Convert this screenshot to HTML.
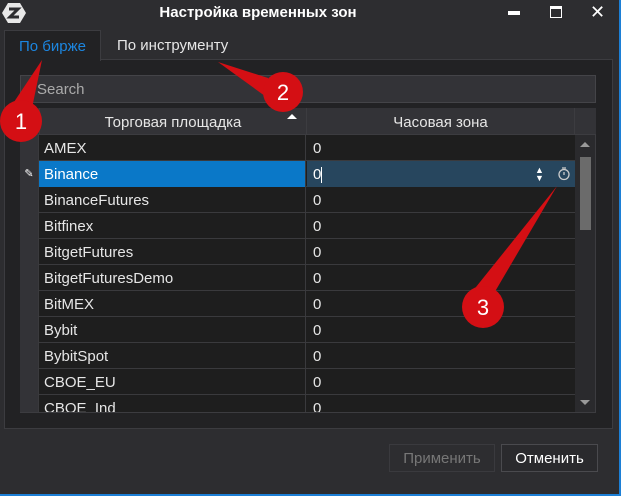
<!DOCTYPE html>
<html><head><meta charset="utf-8"><style>
*{margin:0;padding:0;box-sizing:border-box}
body{width:621px;height:496px;background:#2d2d30;font-family:"Liberation Sans",sans-serif;color:#e6e6e6;position:relative;overflow:hidden;font-size:15px}
.a{position:absolute}
.title{left:0;top:0;width:516px;height:28px;text-align:center;font-weight:bold;font-size:15px;line-height:25px;color:#fff}
.row{position:absolute;left:20px;width:555px;height:26px;border-bottom:1px solid #3a3a3d}
.row .h{position:absolute;left:0;top:0;width:19px;height:26px;background:#333337;border-right:1px solid #3a3a3d}
.row .c1{position:absolute;left:19px;top:0;width:267px;height:26px;line-height:27px;padding-left:5px;border-right:1px solid #3a3a3d}
.row .c2{position:absolute;left:287px;top:0;width:268px;height:26px;line-height:27px;padding-left:6px}
</style></head><body>
<div class="a" style="right:0;top:0;width:2px;height:496px;background:#1c7fd6"></div>
<div class="a" style="left:0;bottom:0;width:621px;height:2px;background:#1c7fd6"></div>
<svg class="a" style="left:2px;top:2px" width="24" height="22" viewBox="0 0 24 22"><polygon points="6,1 18,1 24,11 18,21 6,21 0,11" fill="#e8e8e8"/><path d="M7 7h9l-8 8h9" stroke="#2d2d30" stroke-width="3" fill="none"/></svg>
<div class="a title">Настройка временных зон</div>
<div class="a" style="left:508px;top:11px;width:12px;height:4px;background:#fff"></div>
<div class="a" style="left:550px;top:6px;width:12px;height:12px;border:1.5px solid #fff;border-top-width:3px"></div>
<div class="a" style="left:590px;top:2px;font-size:18px;color:#fff">✕</div>
<div class="a" style="left:4px;top:59px;width:609px;height:370px;background:#222224;border:1px solid #3c3c40"></div>
<div class="a" style="left:4px;top:30px;width:97px;height:31px;background:#222224;border:1px solid #3c3c40;border-bottom:none;color:#1c86e0;padding:7px 0 0 14px">По бирже</div>
<div class="a" style="left:117px;top:37px;color:#e6e6e6">По инструменту</div>
<div class="a" style="left:20px;top:75px;width:576px;height:28px;background:#333337;border:1px solid #444448;color:#aaa;line-height:27px;padding-left:16px">Search</div>
<div class="a" style="left:20px;top:108px;width:576px;height:305px;background:#1e1e1e;border:1px solid #3c3c40"></div>
<div class="a" style="left:20px;top:108px;width:576px;height:27px;background:#333337;border-bottom:1px solid #3c3c40"></div>
<div class="a" style="left:39px;top:108px;width:268px;height:27px;border-left:1px solid #3c3c40;border-right:1px solid #3c3c40;text-align:center;line-height:29px">Торговая площадка</div>
<div class="a" style="left:287px;top:114px;width:0;height:0;border-left:5px solid transparent;border-right:5px solid transparent;border-bottom:5px solid #fff"></div>
<div class="a" style="left:307px;top:108px;width:268px;height:27px;border-right:1px solid #3c3c40;text-align:center;line-height:29px">Часовая зона</div>
<div class="row" style="top:135px"><div class="h"></div><div class="c1">AMEX</div><div class="c2">0</div></div>
<div class="row" style="top:161px"><div class="h" style="color:#fff;font-size:11px;text-align:center;line-height:26px">✎</div><div class="c1" style="background:#0a78c8;color:#fff">Binance</div><div class="c2" style="background:#27465e;color:#fff">0<span style="display:inline-block;width:1px;height:16px;background:#fff;vertical-align:middle"></span>
<span style="position:absolute;left:228px;top:5px;font-size:9px;line-height:8px;color:#fff">▲<br>▼</span>
<svg style="position:absolute;left:250px;top:5px" width="14" height="15" viewBox="0 0 14 15"><circle cx="7" cy="8.5" r="5" fill="none" stroke="#ccc" stroke-width="1.3"/><path d="M5 2h4M7 6v3" stroke="#ccc" stroke-width="1.3"/></svg></div></div>
<div class="row" style="top:187px"><div class="h"></div><div class="c1">BinanceFutures</div><div class="c2">0</div></div>
<div class="row" style="top:213px"><div class="h"></div><div class="c1">Bitfinex</div><div class="c2">0</div></div>
<div class="row" style="top:239px"><div class="h"></div><div class="c1">BitgetFutures</div><div class="c2">0</div></div>
<div class="row" style="top:265px"><div class="h"></div><div class="c1">BitgetFuturesDemo</div><div class="c2">0</div></div>
<div class="row" style="top:291px"><div class="h"></div><div class="c1">BitMEX</div><div class="c2">0</div></div>
<div class="row" style="top:317px"><div class="h"></div><div class="c1">Bybit</div><div class="c2">0</div></div>
<div class="row" style="top:343px"><div class="h"></div><div class="c1">BybitSpot</div><div class="c2">0</div></div>
<div class="row" style="top:369px"><div class="h"></div><div class="c1">CBOE_EU</div><div class="c2">0</div></div>
<div class="row" style="top:395px;height:17px;overflow:hidden;border:none"><div class="h"></div><div class="c1">CBOE_Ind</div><div class="c2">0</div></div>
<div class="a" style="left:575px;top:135px;width:20px;height:277px;background:#2a2a2d"></div>
<div class="a" style="left:580px;top:142px;border-left:5px solid transparent;border-right:5px solid transparent;border-bottom:5px solid #999"></div>
<div class="a" style="left:580px;top:157px;width:11px;height:73px;background:#6b6b6b"></div>
<div class="a" style="left:580px;top:400px;border-left:5px solid transparent;border-right:5px solid transparent;border-top:5px solid #999"></div>
<div class="a" style="left:389px;top:444px;width:106px;height:28px;border:1px solid #3a3a3e;color:#777;text-align:center;line-height:27px">Применить</div>
<div class="a" style="left:501px;top:444px;width:97px;height:28px;border:1px solid #4a4a4e;background:#2a2a2d;color:#fff;text-align:center;line-height:27px">Отменить</div>
<svg class="a" style="left:0;top:0" width="621" height="496">
<g fill="#d40f14">
<polygon points="42,60 12,105 32,108"/><circle cx="21" cy="121" r="21"/>
<polygon points="218,62 268,78 276,104"/><circle cx="283" cy="92" r="20"/>
<polygon points="557,186 472,292 493,295"/><circle cx="483" cy="307" r="21"/>
</g>
<g fill="#fff" font-family="Liberation Sans" font-size="22" text-anchor="middle">
<text x="21" y="129">1</text><text x="283" y="100">2</text><text x="483" y="315">3</text></g>
</svg>
</body></html>
